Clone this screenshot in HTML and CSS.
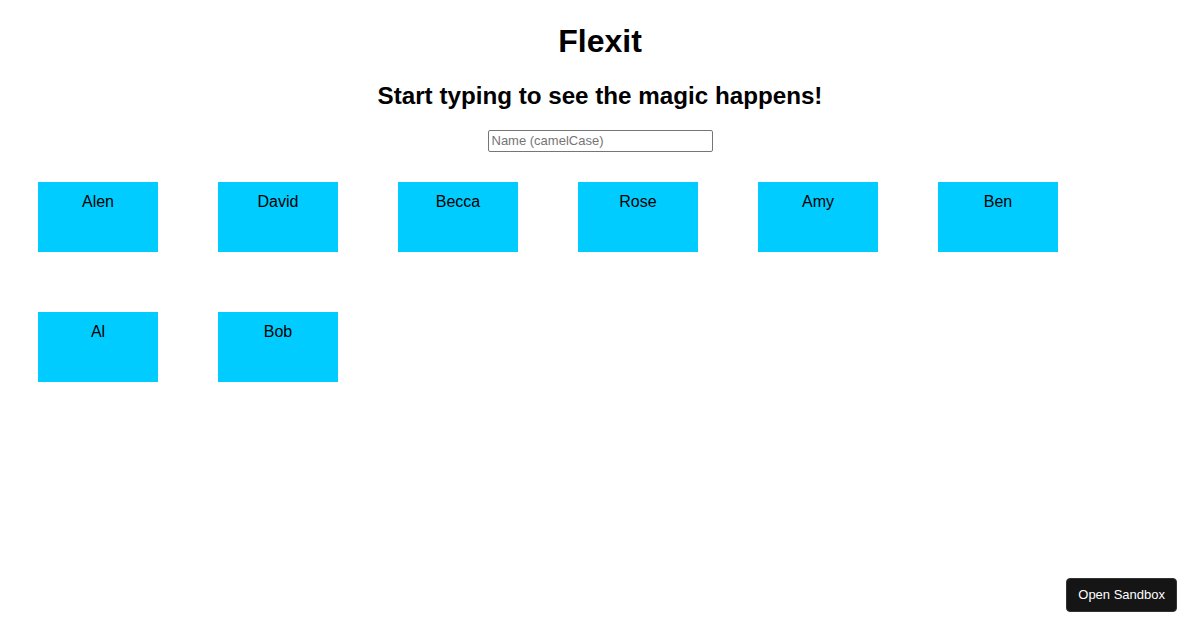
FILE: index.html
```html
<!DOCTYPE html>
<html>
<head>
<meta charset="utf-8">
<link rel="stylesheet" href="styles.css">
</head>
<body>
<div class="app">
  <h1 class="title">Flexit</h1>
  <h2 class="subtitle">Start typing to see the magic happens!</h2>
  <div class="search"><input class="search-input" type="text" placeholder="Name (camelCase)"></div>
  <div class="grid">
    <div class="card">Alen</div>
    <div class="card">David</div>
    <div class="card">Becca</div>
    <div class="card">Rose</div>
    <div class="card">Amy</div>
    <div class="card">Ben</div>
    <div class="card">Al</div>
    <div class="card">Bob</div>
  </div>
</div>
<a class="sandbox-btn">Open Sandbox</a>
</body>
</html>
```
FILE: styles.css
```css
body {
  margin: 2px 8px 8px;
  font-family: "Liberation Sans", Arial, sans-serif;
  background: #fff;
  color: #000;
}
.app {
  text-align: center;
}
.title {
  font-size: 32px;
  margin: 21.44px 0;
}
.subtitle {
  font-size: 24.2px;
  margin: 19.92px 0;
}
.search-input {
  box-sizing: border-box;
  width: 225px;
  height: 22px;
  font-family: "Liberation Sans", Arial, sans-serif;
  font-size: 13px;
  padding: 1px 3px;
  border: 1px solid #767676;
  border-radius: 2px;
  margin: 0;
  vertical-align: top;
}
.search-input::placeholder {
  color: #757575;
}
.grid {
  display: flex;
  flex-wrap: wrap;
}
.card {
  width: 120px;
  height: 70px;
  margin: 30px;
  box-sizing: border-box;
  padding-top: 11px;
  background: #00ccff;
  font-size: 16px;
  line-height: 18px;
  text-align: center;
}
.sandbox-btn {
  position: fixed;
  right: 23px;
  bottom: 18px;
  background: #151515;
  color: #fff;
  font-family: "Liberation Sans", Arial, sans-serif;
  font-size: 13px;
  padding: 0 11px;
  height: 34px;
  line-height: 32px;
  border-radius: 4px;
  border: 1px solid #333;
  box-sizing: border-box;
}
```
